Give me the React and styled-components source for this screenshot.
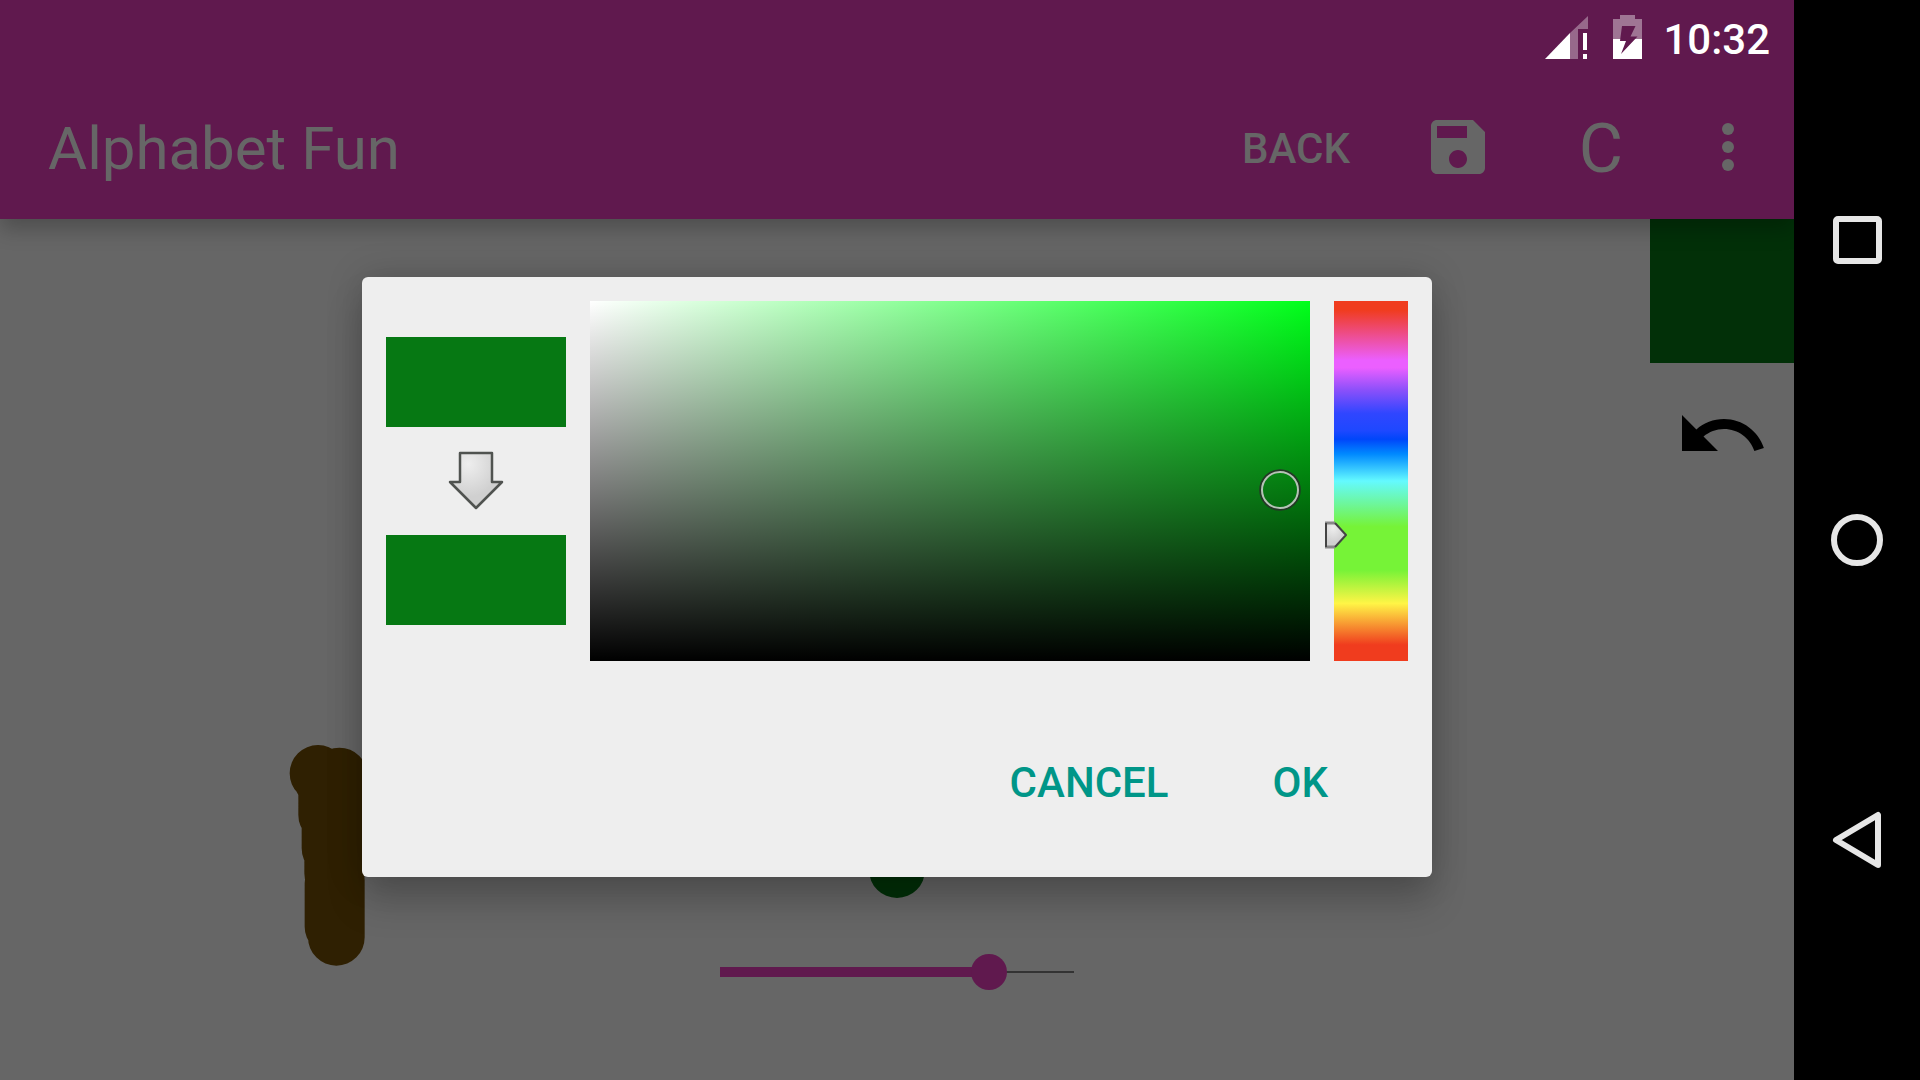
import React, { useState } from "react";
import styled, { createGlobalStyle } from "styled-components";

const GlobalStyle = createGlobalStyle`
  * { box-sizing: border-box; }
  body {
    margin: 0;
    background: #000;
    font-family: Roboto, "Noto Sans", sans-serif;
  }
  button { font-family: inherit; }
`;

const Screen = styled.div`
  display: flex;
  min-height: 100vh;
`;

const Activity = styled.div`
  position: relative;
  flex: 1;
  min-width: 0;
  display: flex;
  flex-direction: column;
  background: #666;
  overflow: hidden;
`;

const Header = styled.header`
  position: relative;
  z-index: 1;
  background: #60194e;
  box-shadow: 0 10px 20px rgba(0, 0, 0, 0.24);
`;

const StatusBar = styled.div`
  display: flex;
  justify-content: flex-end;
  align-items: center;
  height: 75px;
  padding: 4px 24px 0 0;
`;

const Clock = styled.time`
  margin-left: 20px;
  color: #fff;
  font-size: 42px;
  line-height: 48px;
  font-weight: 500;
`;

const StatusIcon = styled.svg`
  display: block;
  height: 44px;
  width: ${(p) => p.$width}px;
  margin-left: 24px;
  margin-bottom: 6px;
`;

const Toolbar = styled.div`
  display: flex;
  align-items: center;
  height: 144px;
  padding-left: 48px;
`;

const Title = styled.h1`
  flex: 1;
  margin: 0;
  padding-top: 4px;
  color: #666;
  font-size: 60px;
  line-height: 72px;
  font-weight: 400;
`;

const ToolButton = styled.button`
  display: flex;
  align-items: center;
  justify-content: center;
  width: ${(p) => p.$width}px;
  height: 144px;
  padding: ${(p) => (p.$text ? "4px 0 0" : "0")};
  border: 0;
  background: none;
  color: #666;
  font-size: ${(p) => (p.$text === "large" ? 68 : 42)}px;
  line-height: 72px;
  font-weight: ${(p) => (p.$text === "large" ? 400 : 500)};
`;

const Icon = styled.svg`
  display: block;
  width: ${(p) => p.$size}px;
  height: ${(p) => p.$size}px;
  fill: currentColor;
`;

const Board = styled.main`
  position: relative;
  flex: 1;
  display: flex;
  flex-direction: column;
  justify-content: space-between;
`;

const Palette = styled.div`
  align-self: flex-end;
  display: flex;
  flex-direction: column;
`;

const PaletteButton = styled.button`
  display: flex;
  align-items: center;
  justify-content: center;
  width: 144px;
  height: 144px;
  padding: 0;
  border: 0;
  background: ${(p) => p.$color || "none"};
  color: #000;
`;

const Stroke = styled.svg`
  position: absolute;
  left: 260px;
  bottom: 100px;
  width: 160px;
  height: 260px;
  fill: none;
  stroke: #2f2002;
`;

const BrushSize = styled.div`
  display: flex;
  flex-direction: column;
  align-items: center;
  gap: 56px;
  padding-bottom: 90px;
`;

const BrushDot = styled.div`
  width: 56px;
  height: 56px;
  border-radius: 50%;
  background: #023008;
`;

const SizeSlider = styled.input`
  appearance: none;
  width: 354px;
  height: 36px;
  margin: 0;
  background:
    linear-gradient(#60194e, #60194e) left center / 76% 10px no-repeat,
    linear-gradient(#333, #333) center / 100% 2px no-repeat;

  &::-webkit-slider-thumb {
    appearance: none;
    width: 36px;
    height: 36px;
    border-radius: 50%;
    background: #60194e;
  }
`;

const Overlay = styled.div`
  position: absolute;
  inset: 72px 0 0;
  z-index: 2;
  display: flex;
  align-items: center;
  justify-content: center;
`;

const Dialog = styled.section`
  display: flex;
  flex-direction: column;
  margin-bottom: -2px;
  padding: 24px;
  border-radius: 6px;
  background: #eee;
  box-shadow: 0 26px 36px rgba(0, 0, 0, 0.18), 0 0 36px rgba(0, 0, 0, 0.18);
`;

const Picker = styled.div`
  display: flex;
  gap: 24px;
`;

const Compare = styled.div`
  display: flex;
  flex-direction: column;
  align-items: center;
  gap: 24px;
  padding-top: 36px;
`;

const Swatch = styled.div`
  width: 180px;
  height: 90px;
  background: ${(p) => p.$color};
`;

const Arrow = styled.svg`
  display: block;
  width: 60px;
  height: 60px;
`;

const Shades = styled.div`
  position: relative;
  width: 720px;
  height: 360px;
  background:
    linear-gradient(to top, #000, transparent),
    linear-gradient(to right, #fff, #00ff1a);
`;

const ShadeCursor = styled.svg`
  position: absolute;
  left: 669px;
  top: 168px;
  width: 42px;
  height: 42px;
  fill: none;
`;

const Hues = styled.div`
  position: relative;
  width: 74px;
  height: 360px;
  background: linear-gradient(
    #f03c1e 2.5%, #eb5fff 16.5%, #eb5fff 18.5%, #8c50fa 24.7%, #3046ff 31.2%,
    #1e48ff 36%, #0046fa 38.4%, #0089ff 42.5%, #64faff 50%, #76f337 62.7%,
    #76f337 74.7%, #fff546 84%, #f03c1e 95.5%
  );
`;

const HueCursor = styled.svg`
  position: absolute;
  left: -10px;
  top: 219px;
  width: 24px;
  height: 30px;
`;

const Actions = styled.div`
  display: flex;
  justify-content: flex-end;
  gap: 56px;
  padding: 48px 56px 0 0;
`;

const DialogButton = styled.button`
  min-width: 100px;
  height: 144px;
  padding: 4px 24px 0;
  border: 0;
  background: none;
  color: #009688;
  font-size: 42px;
  line-height: 48px;
  font-weight: 500;
`;

const SystemNav = styled.nav`
  display: flex;
  flex-direction: column;
  flex: none;
  width: 126px;
  padding: 90px 0;
  background: #000;
`;

const NavButton = styled.button`
  flex: 1;
  display: flex;
  align-items: center;
  justify-content: center;
  padding: 0;
  border: 0;
  background: none;
`;

const NavIcon = styled.svg`
  display: block;
  width: 60px;
  height: 60px;
  fill: none;
  stroke: #e6e6e6;
  stroke-width: 6px;
  stroke-linejoin: round;
`;

const BATTERY =
  "M7 0H22V4H29V44H0V4H7ZM9 11 7 26H13L8 39 24.5 21.5H17.5L22.5 11Z";

export default function App() {
  const [size, setSize] = useState(79);
  return (
    <Screen>
      <GlobalStyle />
      <Activity>
        <Header>
          <StatusBar>
            <StatusIcon $width={44} viewBox="0 0 44 44" aria-hidden="true">
              <path d="M0 44 25 18V44Z" fill="#fff" />
              <path d="M25 18 43 1V14H33V44H25Z" fill="#fff" opacity="0.35" />
              <path d="M38 18h4v17h-4ZM38 39h4v5h-4Z" fill="#fff" />
            </StatusIcon>
            <StatusIcon $width={30} viewBox="0 0 30 44" aria-hidden="true">
              <defs>
                <clipPath id="battery-empty"><rect width="30" height="24" /></clipPath>
                <clipPath id="battery-full"><rect y="24" width="30" height="20" /></clipPath>
              </defs>
              <path d={BATTERY} fillRule="evenodd" fill="#fff" opacity="0.4" clipPath="url(#battery-empty)" />
              <path d={BATTERY} fillRule="evenodd" fill="#fff" clipPath="url(#battery-full)" />
            </StatusIcon>
            <Clock>10:32</Clock>
          </StatusBar>
          <Toolbar>
            <Title>Alphabet Fun</Title>
            <ToolButton $width={160} $text="normal">BACK</ToolButton>
            <ToolButton $width={164} aria-label="Save">
              <Icon $size={72} viewBox="0 0 24 24">
                <path d="M17 3H5c-1.11 0-2 .9-2 2v14c0 1.1.89 2 2 2h14c1.1 0 2-.9 2-2V7l-4-4zm-5 16c-1.66 0-3-1.34-3-3s1.34-3 3-3 3 1.34 3 3-1.34 3-3 3zm3-10H5V5h10v4z" />
              </Icon>
            </ToolButton>
            <ToolButton $width={122} $text="large">C</ToolButton>
            <ToolButton $width={132} aria-label="More options">
              <Icon $size={72} viewBox="0 0 24 24">
                <circle cx="12" cy="6" r="2" />
                <circle cx="12" cy="12" r="2" />
                <circle cx="12" cy="18" r="2" />
              </Icon>
            </ToolButton>
          </Toolbar>
        </Header>

        <Board>
          <Palette>
            <PaletteButton $color="#023008" aria-label="Brush colour" />
            <PaletteButton aria-label="Undo">
              <Icon $size={96} viewBox="0 0 24 24">
                <path d="M12.5 8c-2.65 0-5.05.99-6.9 2.6L2 7v9h9l-3.62-3.62c1.39-1.16 3.16-1.88 5.12-1.88 3.54 0 6.55 2.31 7.6 5.5l2.37-.78C21.08 11.03 17.15 8 12.5 8z" />
              </Icon>
            </PaletteButton>
          </Palette>
          <Stroke viewBox="0 0 480 780" strokeWidth="170" strokeLinecap="round" aria-hidden="true">
            <path d="M174 160h.1M238 168V415M186 174v4M200 205V285M210 285V385M218 380V460M219 490V620M229 480V652" />
          </Stroke>
          <BrushSize>
            <BrushDot />
            <SizeSlider
              type="range"
              min="0"
              max="100"
              aria-label="Brush size"
              value={size}
              onChange={(e) => setSize(Number(e.target.value))}
            />
          </BrushSize>
        </Board>

        <Overlay>
          <Dialog role="dialog" aria-label="Pick a colour">
            <Picker>
              <Compare>
                <Swatch $color="#067813" />
                <Arrow viewBox="0 0 60 60" aria-hidden="true">
                  <defs>
                    <radialGradient id="metal" cx="0.35" cy="0.2" r="0.6">
                      <stop offset="0" stopColor="#eee" />
                      <stop offset="1" stopColor="#d0d0d0" />
                    </radialGradient>
                  </defs>
                  <path
                    d="M14 2H46V31H56L30 57 4 31H14Z"
                    fill="url(#metal)"
                    stroke="#505350"
                    strokeWidth="2.5"
                    strokeLinejoin="round"
                  />
                </Arrow>
                <Swatch $color="#067813" />
              </Compare>
              <Shades>
                <ShadeCursor viewBox="0 0 42 42" aria-hidden="true">
                  <circle cx="21" cy="21" r="19" stroke="#243626" strokeWidth="3.5" />
                  <circle cx="21" cy="21" r="18" stroke="#b4c4b5" strokeWidth="2" />
                </ShadeCursor>
              </Shades>
              <Hues>
                <HueCursor viewBox="0 0 24 30" aria-hidden="true">
                  <path d="M2 3H11L22 15 11 27H2Z" fill="url(#metal)" />
                  <path d="M1 3H11M1 27H11" stroke="#888" strokeWidth="3" />
                  <path d="M2 3V27M11 3 22 15 11 27" fill="none" stroke="#444" strokeWidth="2" strokeLinejoin="round" />
                </HueCursor>
              </Hues>
            </Picker>
            <Actions>
              <DialogButton>CANCEL</DialogButton>
              <DialogButton>OK</DialogButton>
            </Actions>
          </Dialog>
        </Overlay>
      </Activity>

      <SystemNav>
        <NavButton aria-label="Recent apps">
          <NavIcon viewBox="0 0 60 60">
            <rect x="9" y="9" width="43" height="42" rx="2" />
          </NavIcon>
        </NavButton>
        <NavButton aria-label="Home">
          <NavIcon viewBox="0 0 60 60">
            <circle cx="30" cy="30" r="23" />
          </NavIcon>
        </NavButton>
        <NavButton aria-label="Back">
          <NavIcon viewBox="0 0 60 60">
            <path d="M51 5V55L9 30Z" />
          </NavIcon>
        </NavButton>
      </SystemNav>
    </Screen>
  );
}
